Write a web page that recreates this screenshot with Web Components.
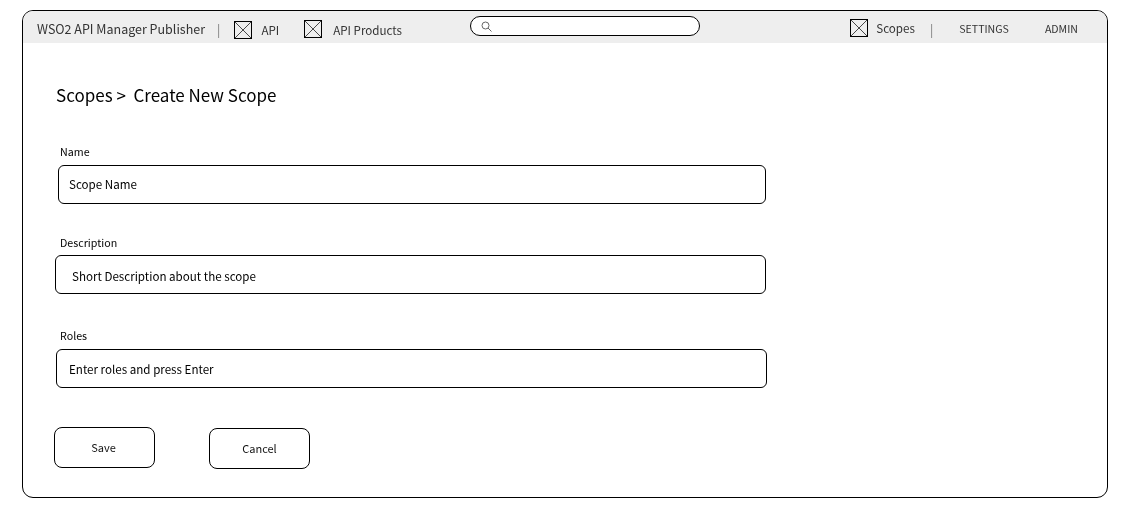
<!DOCTYPE html>
<html>
<head>
<meta charset="utf-8">
<title>Create New Scope</title>
<style>
  html, body { margin: 0; background: #fff; }
  body { font-family: "Noto Sans CJK SC", "Noto Sans", sans-serif; color: #000; }
  wf-frame { margin: 10px 0 0 22px; will-change: transform; }
</style>
</head>
<body>
<wf-frame>
  <wf-topbar slot="top">
    <wf-nav slot="left" style="margin-left:14px" gap="9">API</wf-nav>
    <wf-nav slot="left" style="margin-left:25px" gap="11" shift="-1">API Products</wf-nav>
    <wf-nav slot="right" shift="-2" texttop="1" gap="8">Scopes</wf-nav>
  </wf-topbar>
  <wf-form>
    <wf-field label="Name" value="Scope Name" left="35" width="708" top="36" pad="10" gap="5" nudge="-1"></wf-field>
    <wf-field label="Description" value="Short Description about the scope" left="32" width="711" top="31" pad="16" gap="4" labelleft="5" nudge="1"></wf-field>
    <wf-field label="Roles" value="Enter roles and press Enter" left="33" width="711" top="34" pad="12" gap="5" labelleft="4"></wf-field>
    <wf-actions>
      <wf-button style="padding-right:2px">Save</wf-button>
      <wf-button style="margin:1px 0 0 54px">Cancel</wf-button>
    </wf-actions>
  </wf-form>
</wf-frame>

<script>
// small helper, every element gets an open shadow root from a string
class Base extends HTMLElement {
  constructor(html) {
    super();
    this.attachShadow({ mode: 'open' }).innerHTML = html;
  }
}

class WfFrame extends Base {
  constructor() {
    super(`
      <style>
        :host { display: block; width: 1086px; height: 488px; box-sizing: border-box;
          border: 1px solid #000; border-radius: 11px; overflow: hidden; }
      </style>
      <slot name="top"></slot>
      <slot></slot>`);
  }
}

class WfCross extends Base {
  constructor() {
    super(`
      <style>:host { display: block; width: 18px; height: 18px; flex: none; } svg { display: block; }</style>
      <svg width="18" height="18" viewBox="0 0 18 18" fill="none" stroke="#000" stroke-width="1">
        <rect x=".5" y=".5" width="17" height="17"/>
        <path d="M.5 .5L17.5 17.5M17.5 .5L.5 17.5" stroke-width=".7"/>
      </svg>`);
  }
}

class WfNav extends Base {
  constructor() {
    super(`
      <style>
        :host { display: flex; align-items: center; font-size: 11.6px; color: #333; white-space: nowrap; }
        span { position: relative; top: 3px; }
        wf-cross { position: relative; top: 3px; }
      </style>
      <wf-cross></wf-cross><span><slot></slot></span>`);
  }
  connectedCallback() {
    const span = this.shadowRoot.querySelector('span');
    span.style.marginLeft = (this.getAttribute('gap') || 9) + 'px';
    if (this.hasAttribute('texttop')) span.style.top = this.getAttribute('texttop') + 'px';
    if (this.hasAttribute('shift')) {
      this.shadowRoot.querySelector('wf-cross').style.top = (3 + Number(this.getAttribute('shift'))) + 'px';
    }
  }
}

class WfTopbar extends Base {
  constructor() {
    super(`
      <style>
        :host { display: flex; align-items: center; height: 32px; background: #eee;
          color: #333; font-size: 12.5px; white-space: nowrap; }
        .left { display: flex; align-items: center; width: 433px; margin-left: 14px; flex: none; }
        .title, .pipe, .u { position: relative; top: 1px; }
        .u { font-size: 10.6px; }
        .pipe { color: #777; }
        .search { box-sizing: border-box; width: 230px; height: 20px; margin-top: -2px; flex: none;
          background: #fff; border: 1px solid #000; border-radius: 10px; display: flex; align-items: center; }
        .search svg { margin-left: 10px; }
        .right { display: flex; align-items: center; margin-left: auto; padding-right: 29px; }
      </style>
      <div class="left">
        <span class="title">WSO2 API Manager Publisher</span>
        <span class="pipe" style="margin-left:12px">|</span>
        <slot name="left"></slot>
      </div>
      <div class="search">
        <svg width="11" height="11" viewBox="0 0 11 11" fill="none" stroke="#666">
          <circle cx="4.5" cy="4.5" r="3.5"/><path d="M7 7L10.5 10.5"/>
        </svg>
      </div>
      <div class="right">
        <slot name="right"></slot>
        <span class="pipe" style="margin-left:15px">|</span>
        <span class="u" style="margin-left:26px">SETTINGS</span>
        <span class="u" style="margin-left:36px">ADMIN</span>
      </div>`);
  }
}

class WfForm extends Base {
  constructor() {
    super(`
      <style>
        :host { display: block; }
        h1 { margin: 39px 0 0 33px; font-size: 17px; font-weight: 400;
          line-height: 26px; white-space: pre; color: #000; }
      </style>
      <h1>Scopes &gt;  Create New Scope</h1>
      <slot></slot>`);
  }
}

class WfField extends Base {
  constructor() {
    super(`
      <style>
        :host { display: block; }
        label { display: block; font-size: 10.7px; line-height: 16px; height: 16px; }
        .box { box-sizing: border-box; height: 39px; border: 1px solid #000; border-radius: 6px;
          background: #fff; display: flex; align-items: center; font-size: 11.6px; }
        .box span { position: relative; }
      </style>
      <label></label><div class="box"><span></span></div>`);
  }
  connectedCallback() {
    const a = n => this.getAttribute(n);
    const label = this.shadowRoot.querySelector('label');
    const box = this.shadowRoot.querySelector('.box');
    const text = box.querySelector('span');
    label.textContent = a('label');
    label.style.marginLeft = (a('labelleft') || 2) + 'px';
    label.style.marginBottom = a('gap') + 'px';
    text.textContent = a('value');
    text.style.top = (a('nudge') || 0) + 'px';
    box.style.paddingLeft = a('pad') + 'px';
    this.style.marginTop = a('top') + 'px';
    this.style.marginLeft = a('left') + 'px';
    this.style.width = a('width') + 'px';
  }
}

class WfActions extends Base {
  constructor() {
    super(`
      <style>:host { display: flex; align-items: flex-start; margin: 39px 0 0 31px; }</style>
      <slot></slot>`);
  }
}

class WfButton extends Base {
  constructor() {
    super(`
      <style>
        :host { display: flex; align-items: center; justify-content: center; box-sizing: border-box;
          width: 101px; height: 41px; padding-bottom: 2px; border: 1px solid #000; border-radius: 8px;
          font-size: 11px; color: #111; }
      </style>
      <slot></slot>`);
  }
}

customElements.define('wf-frame', WfFrame);
customElements.define('wf-cross', WfCross);
customElements.define('wf-nav', WfNav);
customElements.define('wf-topbar', WfTopbar);
customElements.define('wf-form', WfForm);
customElements.define('wf-field', WfField);
customElements.define('wf-actions', WfActions);
customElements.define('wf-button', WfButton);
</script>
</body>
</html>
